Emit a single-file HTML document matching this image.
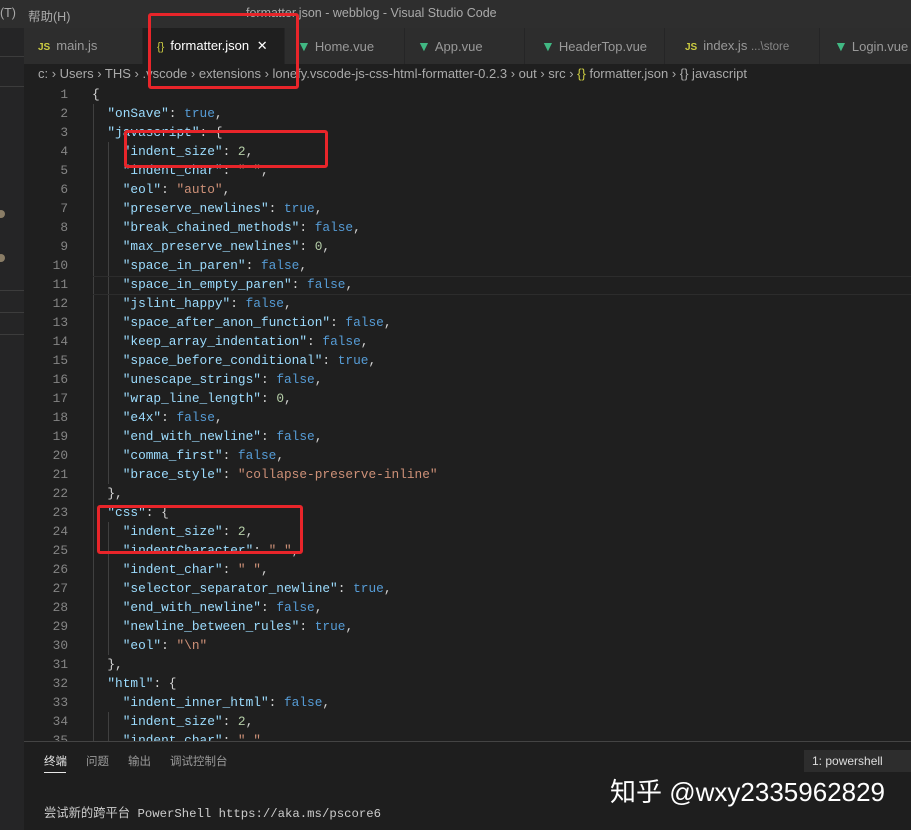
<!DOCTYPE html>
<html><head><meta charset="utf-8"><style>
*{margin:0;padding:0;box-sizing:border-box}
body{width:911px;height:830px;background:#1f1f1f;position:relative;overflow:hidden;font-family:"Liberation Sans","Noto Sans CJK SC",sans-serif;color:#ccc}
.title{position:absolute;left:0;top:0;width:911px;height:28px;background:#2e2e2e;font-size:12.5px;color:#aaa}
.title span{position:absolute;top:6px}
.side{position:absolute;left:0;top:28px;width:24px;height:802px;background:#252526}
.side i{position:absolute;left:0;width:24px;height:1px;background:#3c3c3c}
.dot{position:absolute;left:-3px;width:8px;height:8px;border-radius:50%;background:#8a7d66}
.tabs{position:absolute;left:24px;top:28px;width:887px;height:36px;background:#252526}
.tab{position:absolute;top:0;height:36px;background:#2d2d2d;border-right:1px solid #252526;font-size:13px;color:#999;line-height:36px;padding-left:12px;white-space:nowrap}
.tab.a{background:#1f1f1f;color:#fff}
.js{color:#cbcb41;font-weight:bold;font-size:10px;margin-right:6px}
.v{color:#41b883;font-weight:bold;margin-right:4px;font-size:14px}
.crumb{position:absolute;left:38px;top:64px;height:20px;font-size:13px;color:#aaa;line-height:20px;white-space:nowrap}
.crumb b{font-weight:normal;color:#cbcb41}
.code{position:absolute;left:24px;top:85px;width:887px;font-family:"Liberation Mono",monospace;font-size:12.8px}
.ln{position:absolute;height:19px;line-height:19px;white-space:pre}
.n{left:0;width:44px;text-align:right;color:#858585}
.c{left:68px;color:#d4d4d4}
.k{color:#9cdcfe}.s{color:#ce9178}.b{color:#569cd6}.num{color:#b5cea8}
.guide{position:absolute;width:1px;background:#404040}
.red{position:absolute;border:3px solid #e8252a;border-radius:3px}
.panel{position:absolute;left:24px;top:741px;width:887px;height:89px;background:#1e1e1e;border-top:1px solid #444}
.pt{position:absolute;top:11px;font-size:11.5px;color:#999}
</style></head><body>
<div class="title"><span style="left:0">(T)</span><span style="left:28px">帮助(H)</span><span style="left:246px">formatter.json - webblog - Visual Studio Code</span></div>
<div class="side"><i style="top:28px;width:24px"></i><i style="top:58px"></i><i style="top:262px"></i><i style="top:284px"></i><i style="top:306px"></i><div class="dot" style="top:182px"></div><div class="dot" style="top:226px"></div></div>
<div class="tabs">
<div class="tab" style="left:0;width:119px;padding-left:14px"><span class="js">JS</span>main.js</div>
<div class="tab a" style="left:119px;width:142px;padding-left:14px"><span style="color:#cbcb41;font-size:11px;margin-right:6px">{}</span>formatter.json <span style="margin-left:4px">✕</span></div>
<div class="tab" style="left:261px;width:120px;padding-left:12px"><span class="v">▼</span>Home.vue</div>
<div class="tab" style="left:381px;width:120px;padding-left:12px"><span class="v">▼</span>App.vue</div>
<div class="tab" style="left:501px;width:140px;padding-left:16px"><span class="v">▼</span>HeaderTop.vue</div>
<div class="tab" style="left:641px;width:155px;padding-left:20px"><span class="js">JS</span>index.js <span style="font-size:11.5px;color:#888">...\store</span></div>
<div class="tab" style="left:796px;width:100px;padding-left:14px"><span class="v">▼</span>Login.vue</div>
</div>
<div class="crumb">c: › Users › THS › .vscode › extensions › lonefy.vscode-js-css-html-formatter-0.2.3 › out › src › <b>{}</b> formatter.json › {} javascript</div>
<div class="code" id="code"></div>
<div class="guide" style="left:93px;top:104px;height:637px"></div>
<div class="guide" style="left:108px;top:142px;height:342px"></div>
<div class="guide" style="left:108px;top:522px;height:133px"></div>
<div class="guide" style="left:108px;top:712px;height:29px"></div>
<div style="position:absolute;left:93px;top:276px;width:818px;height:19px;border-top:1px solid #2c2c2c;border-bottom:1px solid #2c2c2c"></div>
<div class="red" style="left:148px;top:13px;width:151px;height:76px"></div>
<div class="red" style="left:124px;top:130px;width:204px;height:38px"></div>
<div class="red" style="left:97px;top:505px;width:206px;height:49px"></div>
<div class="panel">
<span class="pt" style="left:20px;color:#e7e7e7">终端</span><div style="position:absolute;left:20px;top:30px;width:22px;height:1px;background:#e7e7e7"></div>
<span class="pt" style="left:62px">问题</span><span class="pt" style="left:104px">输出</span><span class="pt" style="left:146px">调试控制台</span>
<div style="position:absolute;left:780px;top:8px;width:107px;height:22px;background:#2d2d2d;font-size:12px;color:#ddd;line-height:22px;padding-left:8px">1: powershell</div>
<div style="position:absolute;left:586px;top:30px;font-size:26px;color:#fff;white-space:nowrap">知乎 @wxy2335962829</div>
<div style="position:absolute;left:20px;top:61px;font-size:12.3px;color:#ccc;white-space:nowrap;font-family:'Liberation Mono','Noto Sans CJK SC',monospace">尝试新的跨平台 PowerShell https://aka.ms/pscore6</div>
</div>
<script>
var L=[
'{',
'  <k>"onSave"</k>: <b>true</b>,',
'  <k>"javascript"</k>: {',
'    <k>"indent_size"</k>: <n>2</n>,',
'    <k>"indent_char"</k>: <s>" "</s>,',
'    <k>"eol"</k>: <s>"auto"</s>,',
'    <k>"preserve_newlines"</k>: <b>true</b>,',
'    <k>"break_chained_methods"</k>: <b>false</b>,',
'    <k>"max_preserve_newlines"</k>: <n>0</n>,',
'    <k>"space_in_paren"</k>: <b>false</b>,',
'    <k>"space_in_empty_paren"</k>: <b>false</b>,',
'    <k>"jslint_happy"</k>: <b>false</b>,',
'    <k>"space_after_anon_function"</k>: <b>false</b>,',
'    <k>"keep_array_indentation"</k>: <b>false</b>,',
'    <k>"space_before_conditional"</k>: <b>true</b>,',
'    <k>"unescape_strings"</k>: <b>false</b>,',
'    <k>"wrap_line_length"</k>: <n>0</n>,',
'    <k>"e4x"</k>: <b>false</b>,',
'    <k>"end_with_newline"</k>: <b>false</b>,',
'    <k>"comma_first"</k>: <b>false</b>,',
'    <k>"brace_style"</k>: <s>"collapse-preserve-inline"</s>',
'  },',
'  <k>"css"</k>: {',
'    <k>"indent_size"</k>: <n>2</n>,',
'    <k>"indentCharacter"</k>: <s>" "</s>,',
'    <k>"indent_char"</k>: <s>" "</s>,',
'    <k>"selector_separator_newline"</k>: <b>true</b>,',
'    <k>"end_with_newline"</k>: <b>false</b>,',
'    <k>"newline_between_rules"</k>: <b>true</b>,',
'    <k>"eol"</k>: <s>"\\n"</s>',
'  },',
'  <k>"html"</k>: {',
'    <k>"indent_inner_html"</k>: <b>false</b>,',
'    <k>"indent_size"</k>: <n>2</n>,',
'    <k>"indent_char"</k>: <s>" "</s>,'];
var h='';
for(var i=0;i<L.length;i++){var t=i*19;
var c=L[i].replace(/<k>/g,'<span class="k">').replace(/<s>/g,'<span class="s">').replace(/<b>/g,'<span class="b">').replace(/<n>/g,'<span class="num">').replace(/<\/[ksbn]>/g,'</span>');
h+='<div class="ln n" style="top:'+t+'px">'+(i+1)+'</div><div class="ln c" style="top:'+t+'px">'+c+'</div>';}
document.getElementById('code').innerHTML=h;
</script>
</body></html>
